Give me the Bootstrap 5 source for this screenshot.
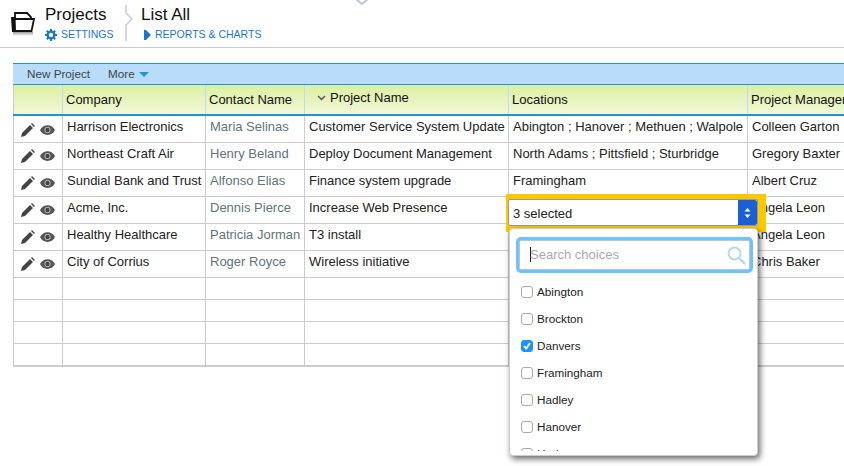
<!DOCTYPE html>
<html lang="en">
<head>
<meta charset="utf-8">
<title>Projects - List All</title>
<link href="https://cdn.jsdelivr.net/npm/bootstrap@5.3.0/dist/css/bootstrap.min.css" rel="stylesheet">
<style>
html,body{height:466px;overflow:hidden;background:#fff}
body{font-family:"Liberation Sans",Arial,sans-serif;font-size:12px;color:#222;position:relative}
.top-tick{position:absolute;left:355px;top:-6px}
.head-bar{height:48px;border-bottom:1px solid #ccc}
.head-icon{width:45px;padding:11px 0 0 10px}
.crumb-a{width:79px}
.crumb-sep{width:17px;padding-top:5px}
.crumb-t{font-size:17px;line-height:20px;color:#111;padding-top:5px}
.crumb-l{font-size:10.5px;line-height:13px;color:#1a76d2;text-decoration:none;margin-top:3px}
.crumb-l.rep{margin-left:3px}
.grid-wrap{margin:15px 0 0 13px;overflow:hidden;width:831px}
.tool-bar{height:22px;background:#b8dcfa;border-top:1px solid #1a96dc;border-bottom:1px solid #1a96dc;padding-left:14px;color:#444;line-height:19px;font-size:11.7px}
.tool-bar span{margin-right:18px}
.more-caret{display:inline-block;margin-left:4px;border:5px solid transparent;border-top-color:#1a96dc;border-bottom:0;vertical-align:middle}
.proj-table{table-layout:fixed;width:860px;border-collapse:collapse;margin:0}
.proj-table th{height:30px;background:linear-gradient(#dcef9f,#f1f7d8);font-weight:400;font-size:13px;color:#111;padding:1px 3px 0;border-left:1px solid #b8dcfa;border-bottom:2px solid #1a96dc;white-space:nowrap;overflow:hidden}
.proj-table th.sorted{padding:0 3px 3px}
.proj-table td{height:27px;padding:0 4px 4px;border-left:1px solid #ccc;border-bottom:1px solid #ccc;font-size:13px;color:#222;white-space:nowrap;overflow:hidden}
.proj-table tr.blank td{height:22px;padding:0}
.proj-table tr.blank.last td{height:23px;border-bottom-width:2px}
.proj-table td:first-child,.proj-table th:first-child{border-left:1px solid #ccc}
.proj-table td.contact{color:#62737a}
.proj-table td.acts{padding:2px 0 2px 7px}
.sort-mark{display:inline-block;margin:0 4px 0 9px;vertical-align:1px}
.pick-box{position:absolute;left:506px;top:194px;width:260px;height:38px;background:#fcc900;padding:5px 8px 6px 2px}
.pick-field{height:27px;background:#fff;border:1px solid #999;border-radius:2px;line-height:27px;padding-left:4px;font-size:13px;color:#222;position:relative}
.pick-btn{position:absolute;right:0;top:0;bottom:0;width:19px;background:#1a5fd6;border-radius:0 2px 2px 0}
.pick-menu{position:absolute;left:509px;top:228px;width:249px;height:228px;background:#fff;border-radius:4px;border:1px solid #ccc;box-shadow:2px 3px 6px rgba(0,0,0,.6);overflow:hidden}
.pick-search{margin:11px 7px 0 9px;height:30px;border:1px solid #c4c4c4;border-radius:2px;box-shadow:0 0 0 3px #6cc3ff;padding-left:10px;line-height:27px;font-size:13px;color:#aaa;position:relative;background:#fff}
.pick-caret{display:inline-block;width:1px;height:15px;background:#222;vertical-align:-3px;margin-right:-1px}
.pick-glass{position:absolute;right:3px;top:5px}
.pick-list{margin-top:8px;padding-left:11px;height:173px;overflow:hidden}
.pick-row{height:27px;display:flex;align-items:center;gap:4px;font-size:11.7px;color:#222}
.pick-check{width:12px;height:12px;border:1px solid #aaa;border-radius:3px;background:#fff;flex:none;display:flex}
.pick-check.on{background:#1a96fa;border-color:#1a96fa}
</style>
</head>
<body>
<svg class="top-tick" width="14" height="12" viewBox="0 0 14 12"><path d="M1 5l6 5 6-5" fill="none" stroke="#b8c8d8" stroke-width="2"/></svg>
<header class="head-bar d-flex">
  <div class="head-icon">
    <svg width="26" height="25" viewBox="0 0 26 25"><defs><linearGradient id="sh" x1="0" y1="0" x2="0" y2="1"><stop offset="0" stop-color="#999"/><stop offset="1" stop-color="#fff"/></linearGradient></defs><rect x="3" y="21" width="20" height="4" fill="url(#sh)"/><path d="M5 8V2h12l4 4v2" fill="none" stroke="#111" stroke-width="1.800"/><path d="M3 8h21l-2.500 12H3z" fill="#fff" stroke="#111" stroke-width="1.800"/><path d="M1 6h4.500L6 21H2z" fill="#111"/></svg>
  </div>
  <div class="crumb-a">
    <div class="crumb-t">Projects</div>
    <a class="crumb-l d-flex align-items-center gap-1" href="#"><svg width="12" height="12" viewBox="0 0 12 12"><circle cx="6" cy="6" r="3.400" fill="none" stroke="#1a76d2" stroke-width="2.400"/><path d="M6 0v2.400M6 9.600V12M0 6h2.400M9.600 6H12M1.800 1.800l1.700 1.700M8.500 8.500l1.700 1.700M10.200 1.800L8.500 3.500M3.500 8.500l-1.700 1.700" stroke="#1a76d2" stroke-width="2"/></svg>SETTINGS</a>
  </div>
  <div class="crumb-sep"><svg width="14" height="36" viewBox="0 0 14 36"><path d="M2 0v8l6 6-6 6v16" fill="none" stroke="#ccc" stroke-width="1.600"/></svg></div>
  <div>
    <div class="crumb-t">List All</div>
    <a class="crumb-l rep d-flex align-items-center" href="#"><svg class="me-1" width="7" height="10" viewBox="0 0 7 10"><path d="M0 0h2l5 5-5 5H0z" fill="#1a76d2"/></svg>REPORTS &amp; CHARTS</a>
  </div>
</header>
<main class="grid-wrap">
  <div class="tool-bar"><span>New Project</span><span>More<i class="more-caret"></i></span></div>
  <table class="proj-table">
    <colgroup><col style="width:49px"><col style="width:143px"><col style="width:99px"><col style="width:204px"><col style="width:239px"><col style="width:126px"></colgroup>
    <thead><tr><th></th><th>Company</th><th>Contact Name</th><th class="sorted"><svg class="sort-mark" width="9" height="6" viewBox="0 0 9 6"><path d="M1 1l3.500 3.500L8 1" fill="none" stroke="#555" stroke-width="1.500"/></svg>Project Name</th><th>Locations</th><th>Project Manager</th></tr></thead>
    <tbody id="rows"></tbody>
  </table>
</main>
<div class="pick-box"><div class="pick-field">3 selected<div class="pick-btn d-flex align-items-center justify-content-center"><svg width="7" height="10" viewBox="0 0 7 10"><path d="M3.500 0L6.500 3.500H.5zM3.500 10L.5 6.500h6z" fill="#fff"/></svg></div></div></div>
<div class="pick-menu">
  <div class="pick-search"><i class="pick-caret"></i>Search choices<svg class="pick-glass" width="19" height="19" viewBox="0 0 19 19"><circle cx="7.500" cy="7.500" r="6" fill="none" stroke="#b0d8f4" stroke-width="1.800"/><path d="M12 12l6 6" stroke="#b0d8f4" stroke-width="2.400"/></svg></div>
  <div class="pick-list" id="choices"></div>
</div>
<script>
var R=[["Harrison Electronics","Maria Selinas","Customer Service System Update","Abington ; Hanover ; Methuen ; Walpole","Colleen Garton"],
["Northeast Craft Air","Henry Beland","Deploy Document Management","North Adams ; Pittsfield ; Sturbridge","Gregory Baxter"],
["Sundial Bank and Trust","Alfonso Elias","Finance system upgrade","Framingham","Albert Cruz"],
["Acme, Inc.","Dennis Pierce","Increase Web Presence","","Angela Leon"],
["Healthy Healthcare","Patricia Jorman","T3 install","","Angela Leon"],
["City of Corrius","Roger Royce","Wireless initiative","","Chris Baker"]];
var I='<svg width="15" height="14" viewBox="0 0 15 14"><path d="M0 14l1-4L9 2l3 3-8 8zM10 1l1-1 3 3-1 1z" fill="#444"/></svg><svg class="ms-1" width="15" height="10" viewBox="0 0 15 10"><path d="M0 5c3-6.500 12-6.500 15 0-3 6.500-12 6.500-15 0z" fill="#555"/><circle cx="7.500" cy="5" r="3" fill="#ccc"/><circle cx="7.500" cy="5" r="2.200" fill="#444"/></svg>';
var h="";
R.forEach(function(r){h+='<tr><td class="acts">'+I+'</td><td>'+r[0]+'</td><td class="contact">'+r[1]+'</td><td>'+r[2]+'</td><td>'+r[3]+'</td><td>'+r[4]+'</td></tr>'});
for(var i=0;i<4;i++)h+='<tr class="blank'+(i==3?' last':'')+'"><td></td><td></td><td></td><td></td><td></td><td></td></tr>';
document.getElementById("rows").innerHTML=h;
var c="";
["Abington","Brockton","Danvers","Framingham","Hadley","Hanover","Hudson"].forEach(function(n){
c+='<div class="pick-row"><span class="pick-check'+(n=="Danvers"?" on":"")+'">'+(n=="Danvers"?'<svg width="10" height="10" viewBox="0 0 10 10"><path d="M2 5l2.200 2.500L8 2" fill="none" stroke="#fff" stroke-width="1.800"/></svg>':'')+'</span>'+n+'</div>'});
document.getElementById("choices").innerHTML=c;
</script>
<script src="https://cdn.jsdelivr.net/npm/bootstrap@5.3.0/dist/js/bootstrap.bundle.min.js"></script>
</body>
</html>
